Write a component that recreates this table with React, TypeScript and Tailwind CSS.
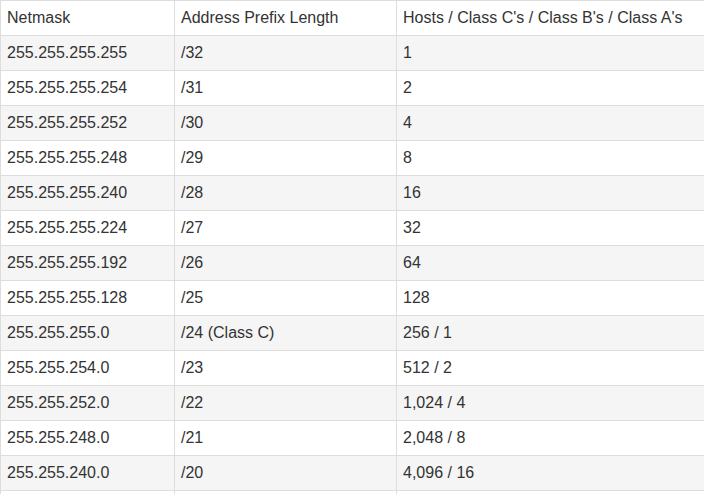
const rows: [string, string, string][] = [
  ["255.255.255.255", "/32", "1"],
  ["255.255.255.254", "/31", "2"],
  ["255.255.255.252", "/30", "4"],
  ["255.255.255.248", "/29", "8"],
  ["255.255.255.240", "/28", "16"],
  ["255.255.255.224", "/27", "32"],
  ["255.255.255.192", "/26", "64"],
  ["255.255.255.128", "/25", "128"],
  ["255.255.255.0", "/24 (Class C)", "256 / 1"],
  ["255.255.254.0", "/23", "512 / 2"],
  ["255.255.252.0", "/22", "1,024 / 4"],
  ["255.255.248.0", "/21", "2,048 / 8"],
  ["255.255.240.0", "/20", "4,096 / 16"],
  ["", "", ""],
];

const cell = "border border-[#dddddd] px-[6px] py-0 h-[35px] leading-[34px] text-left font-normal whitespace-nowrap";

export default function App() {
  return (
    <div
      className="w-[704px] h-[494px] overflow-hidden bg-white text-[16px] text-[#333333]"
      style={{ fontFamily: '"Liberation Sans", Arial, sans-serif' }}
    >
      <table className="table-fixed border-collapse w-[760px]">
        <colgroup>
          <col className="w-[174px]" />
          <col className="w-[222px]" />
          <col />
        </colgroup>
        <thead>
          <tr>
            <th className={cell}>Netmask</th>
            <th className={cell}>Address Prefix Length</th>
            <th className={cell}>Hosts / Class C's / Class B's / Class A's</th>
          </tr>
        </thead>
        <tbody>
          {rows.map((r, i) => (
            <tr key={i} className={i % 2 === 0 ? "bg-[#f5f5f5]" : "bg-white"}>
              <td className={cell}>{r[0]}</td>
              <td className={cell}>{r[1]}</td>
              <td className={cell}>{r[2]}</td>
            </tr>
          ))}
        </tbody>
      </table>
    </div>
  );
}
